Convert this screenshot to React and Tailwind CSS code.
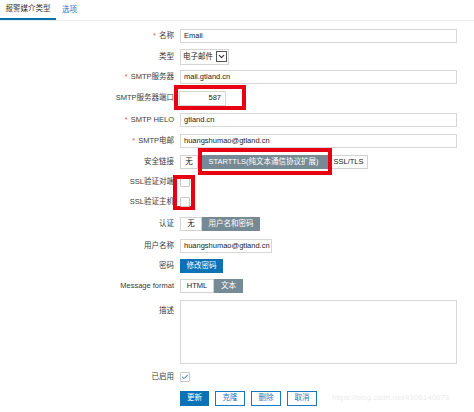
import { Check, ChevronDown } from "lucide-react";

const font = { fontFamily: '"Liberation Sans", "Noto Sans CJK SC", sans-serif' };

const Label = ({ req, children, top }) => (
  <div
    className={`flex justify-end pr-[6px] text-[7.5px] text-[#3b3b3b] whitespace-nowrap ${
      top ? "items-start pt-[5px]" : "items-center"
    }`}
  >
    {req && <span className="text-[#e45b5b] mr-[3px]">*</span>}
    {children}
  </div>
);

const Input = ({ value, className = "w-full" }) => (
  <div
    className={`h-[14px] border border-[#d6d6d6] bg-white flex items-center px-[3px] text-[7.5px] text-[#222] ${className}`}
  >
    {value}
  </div>
);

const Seg = ({ items, active }) => (
  <div className="flex h-[14px]">
    {items.map((it, i) => (
      <div
        key={it.name}
        className={`flex items-center justify-center text-[7.5px] border ${it.w} ${
          i === active
            ? "bg-[#768a96] border-[#768a96] text-white"
            : "bg-white border-[#d2d2d2] text-[#222]"
        }`}
      >
        {it.name}
      </div>
    ))}
  </div>
);

const Box = ({ checked }) => (
  <div className="w-[10px] h-[10px] border border-[#c9c9c9] rounded-[1px] bg-white flex items-center justify-center">
    {checked && <Check size={8} strokeWidth={3} className="text-[#1f6fb5]" />}
  </div>
);

const Row = ({ h, label, req, top, children }) => (
  <div className="grid grid-cols-[180px_1fr]" style={{ height: h }}>
    <Label req={req} top={top}>
      {label}
    </Label>
    <div className={`relative flex ${top ? "items-start" : "items-center"}`}>{children}</div>
  </div>
);

export default function App() {
  return (
    <div className="w-[474px] h-[412px] bg-white overflow-hidden" style={font}>
      <div className="flex items-end h-[21px] border-b border-[#ececec]">
        <div className="w-[56px] h-[21px] flex items-center justify-center border-b-2 border-[#0a6fb0] text-[7.5px] text-[#333]">
          报警媒介类型
        </div>
        <div className="ml-[6px] h-[21px] flex items-center text-[7.5px] text-[#1a78c2]">选项</div>
      </div>

      <div className="pt-[5px] pr-[17px]">
        <Row h={20} label="名称" req>
          <Input value="Email" />
        </Row>
        <Row h={21} label="类型">
          <div className="h-[16px] border border-[#d6d6d6] flex items-center pl-[2px] text-[7.5px] text-[#222] gap-[3px]">
            电子邮件
            <span className="w-[11px] h-[11px] border border-[#555] flex items-center justify-center mr-[1px]">
              <ChevronDown size={9} strokeWidth={3} className="text-[#333]" />
            </span>
          </div>
        </Row>
        <Row h={20} label="SMTP服务器" req>
          <Input value="mail.gtland.cn" />
        </Row>
        <Row h={22} label="SMTP服务器端口">
          <div className="w-[47px] h-[15px] ml-[-1px] border border-[#d6d6d6] flex items-center justify-end pr-[4px] text-[7.5px] text-[#222]">
            587
          </div>
          <div className="absolute left-[-6px] top-[-2px] w-[72px] h-[25px] border-[4px] border-[#e60012]" />
        </Row>
        <Row h={21} label="SMTP HELO" req>
          <Input value="gtland.cn" />
        </Row>
        <Row h={21} label="SMTP电邮" req>
          <Input value="huangshumao@gtland.cn" />
        </Row>
        <Row h={21} label="安全链接">
          <Seg
            active={1}
            items={[
              { name: "无", w: "w-[18px]" },
              { name: "STARTTLS(纯文本通信协议扩展)", w: "w-[131px]" },
              { name: "SSL/TLS", w: "w-[39px]" },
            ]}
          />
          <div className="absolute left-[18px] top-[-3px] w-[134px] h-[27px] border-[4px] border-[#e60012]" />
        </Row>
        <Row h={20} label="SSL验证对端">
          <Box />
          <div className="absolute left-[-7px] top-[3px] w-[22px] h-[35px] border-[4px] border-[#e60012]" />
        </Row>
        <Row h={20} label="SSL验证主机">
          <Box />
        </Row>
        <Row h={23} label="认证">
          <Seg
            active={1}
            items={[
              { name: "无", w: "w-[22px]" },
              { name: "用户名和密码", w: "w-[58px]" },
            ]}
          />
        </Row>
        <Row h={21} label="用户名称">
          <Input value="huangshumao@gtland.cn" className="w-[92px]" />
        </Row>
        <Row h={20} label="密码">
          <div className="h-[14px] w-[43px] bg-[#0b72b6] text-white text-[7.5px] flex items-center justify-center">
            修改密码
          </div>
        </Row>
        <Row h={19} label="Message format">
          <Seg
            active={1}
            items={[
              { name: "HTML", w: "w-[34px]" },
              { name: "文本", w: "w-[29px]" },
            ]}
          />
        </Row>
        <div className="h-[5px]" />
        <Row h={64} label="描述" top>
          <div className="w-full h-[64px] border border-[#d6d6d6]" />
        </Row>
        <Row h={26} label="已启用">
          <Box checked />
        </Row>
        <Row h={16} label="">
          <div className="flex items-center gap-[6px] h-[15px]">
            <div className="w-[29px] h-[15px] bg-[#0b72b6] text-white text-[7.5px] flex items-center justify-center">
              更新
            </div>
            {["克隆", "删除", "取消"].map((t) => (
              <div
                key={t}
                className="w-[30px] h-[15px] border border-[#1a78c2] text-[#1a78c2] text-[7.5px] flex items-center justify-center"
              >
                {t}
              </div>
            ))}
            <span className="ml-[9px] text-[8px] text-[#ececec] whitespace-nowrap">
              https://blog.csdn.net/li106140873
            </span>
          </div>
        </Row>
      </div>
    </div>
  );
}
